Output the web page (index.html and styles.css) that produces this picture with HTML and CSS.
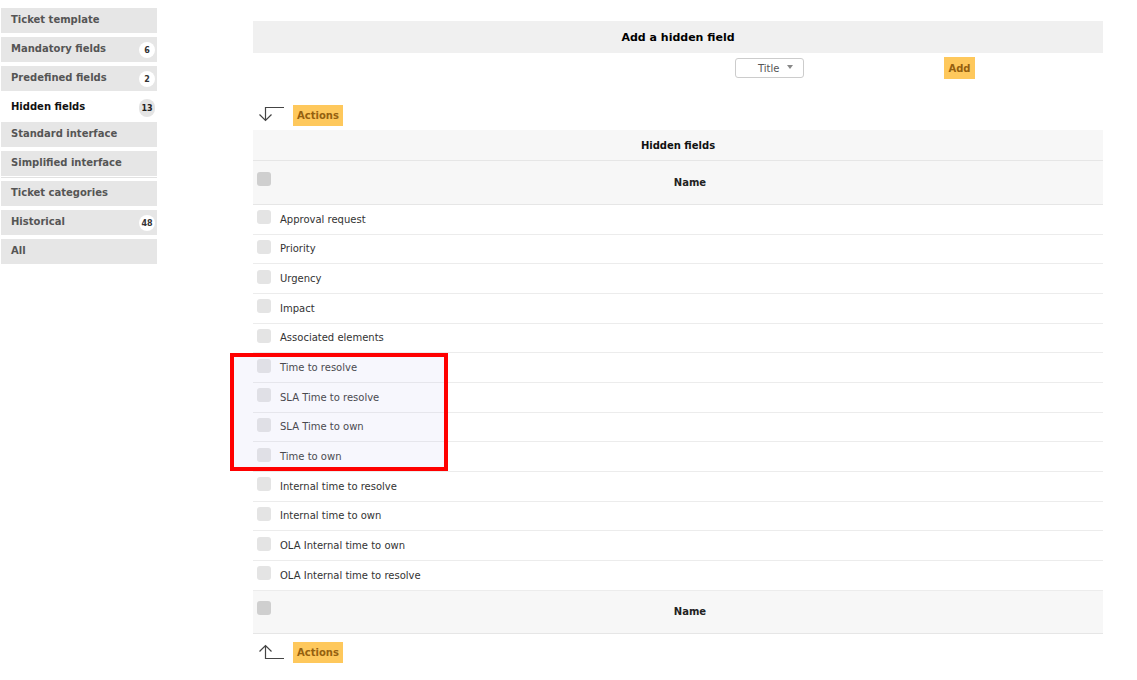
FILE: index.html
```html
<!DOCTYPE html>
<html lang="en">
<head>
<meta charset="utf-8">
<title>Hidden fields</title>
<link rel="stylesheet" href="styles.css">
</head>
<body>
<div class="page">
  <nav class="sidebar">
    <div class="nav-item"><span class="nav-label">Ticket template</span></div>
    <div class="nav-item"><span class="nav-label">Mandatory fields</span><span class="badge">6</span></div>
    <div class="nav-item"><span class="nav-label">Predefined fields</span><span class="badge">2</span></div>
    <div class="nav-item active"><span class="nav-label">Hidden fields</span><span class="badge">13</span></div>
    <div class="nav-item"><span class="nav-label">Standard interface</span></div>
    <div class="nav-item"><span class="nav-label">Simplified interface</span></div>
    <div class="sep"></div>
    <div class="nav-item"><span class="nav-label">Ticket categories</span></div>
    <div class="nav-item"><span class="nav-label">Historical</span><span class="badge">48</span></div>
    <div class="nav-item"><span class="nav-label">All</span></div>
  </nav>

  <main class="main">
    <div class="add-title">Add a hidden field</div>
    <div class="add-row">
      <div></div>
      <div class="select"><span>Title</span><span class="caret"></span></div>
      <div></div>
      <button class="btn">Add</button>
    </div>

    <div class="actions actions-top">
      <svg class="arrow" width="26" height="21" viewBox="0 0 26 21">
        <path d="M25 2.5 H6.5 V15.5 M0.5 9.5 L6.5 15.5 L12.5 9.5" fill="none" stroke="#444" stroke-width="1.2"/>
      </svg>
      <button class="btn">Actions</button>
    </div>

    <div class="table">
      <div class="tbl-title">Hidden fields</div>
      <div class="tbl-head">
        <div class="cell-check"><span class="check dark"></span></div>
        <div class="cell-name">Name</div>
      </div>
      <div class="row"><div class="cell-check"><span class="check"></span></div><div class="cell-text">Approval request</div></div>
      <div class="row"><div class="cell-check"><span class="check"></span></div><div class="cell-text">Priority</div></div>
      <div class="row"><div class="cell-check"><span class="check"></span></div><div class="cell-text">Urgency</div></div>
      <div class="row"><div class="cell-check"><span class="check"></span></div><div class="cell-text">Impact</div></div>
      <div class="row"><div class="cell-check"><span class="check"></span></div><div class="cell-text">Associated elements</div></div>
      <div class="row"><div class="cell-check"><span class="check"></span></div><div class="cell-text">Time to resolve</div></div>
      <div class="row"><div class="cell-check"><span class="check"></span></div><div class="cell-text">SLA Time to resolve</div></div>
      <div class="row"><div class="cell-check"><span class="check"></span></div><div class="cell-text">SLA Time to own</div></div>
      <div class="row"><div class="cell-check"><span class="check"></span></div><div class="cell-text">Time to own</div></div>
      <div class="row"><div class="cell-check"><span class="check"></span></div><div class="cell-text">Internal time to resolve</div></div>
      <div class="row"><div class="cell-check"><span class="check"></span></div><div class="cell-text">Internal time to own</div></div>
      <div class="row"><div class="cell-check"><span class="check"></span></div><div class="cell-text">OLA Internal time to own</div></div>
      <div class="row"><div class="cell-check"><span class="check"></span></div><div class="cell-text">OLA Internal time to resolve</div></div>
      <div class="tbl-head tbl-foot">
        <div class="cell-check"><span class="check dark"></span></div>
        <div class="cell-name">Name</div>
      </div>
    </div>

    <div class="actions actions-bottom">
      <svg class="arrow" width="26" height="21" viewBox="0 0 26 21">
        <path d="M25 16.5 H6.5 V3.5 M0.5 9.5 L6.5 3.5 L12.5 9.5" fill="none" stroke="#444" stroke-width="1.2"/>
      </svg>
      <button class="btn">Actions</button>
    </div>
  </main>
</div>
<div class="highlight"></div>
</body>
</html>
```

FILE: styles.css
```css
html, body {
  margin: 0;
  padding: 0;
  background: #fff;
}

body {
  font-family: "DejaVu Sans", Verdana, sans-serif;
  font-size: 10px;
  color: #333;
  position: relative;
  min-height: 680px;
}

.page {
  display: flex;
  align-items: flex-start;
}

/* Sidebar */
.sidebar {
  width: 156px;
  margin: 8px 0 0 1px;
  display: flex;
  flex-direction: column;
  gap: 4px;
}

.nav-item {
  height: 25px;
  box-sizing: border-box;
  background: #e6e6e6;
  display: flex;
  align-items: center;
  justify-content: space-between;
  padding: 0 2px 0 10px;
  font-weight: bold;
  color: #555;
}

.nav-label {
  margin-bottom: 3px;
}

.nav-item.active {
  background: #fff;
  color: #111;
  margin-bottom: -2px;
}

.badge {
  min-width: 16px;
  height: 16px;
  border-radius: 8px;
  background: #fff;
  color: #333;
  font-size: 8px;
  font-weight: bold;
  display: flex;
  align-items: center;
  justify-content: center;
  margin-top: 1px;
}

.nav-item.active .badge {
  background: #e4e4e4;
  height: 18px;
  color: #222;
}

.sep {
  height: 1px;
  background: #e2e2e2;
  margin: -3px 0 -1px 0;
}

/* Main */
.main {
  margin: 21px 0 0 96px;
  width: 850px;
}

.add-title {
  height: 32px;
  background: #f0f0f0;
  display: flex;
  align-items: center;
  justify-content: center;
  font-size: 11px;
  font-weight: bold;
  color: #000;
}

.add-row {
  height: 32px;
  display: grid;
  grid-template-columns: 482px 69px 140px 31px 1fr;
  align-items: start;
}

.select {
  margin-top: 5px;
  height: 20px;
  box-sizing: border-box;
  border: 1px solid #ccc;
  border-radius: 3px;
  display: flex;
  align-items: center;
  padding-left: 22px;
  color: #555;
}

.caret {
  width: 0;
  height: 0;
  border-left: 3px solid transparent;
  border-right: 3px solid transparent;
  border-top: 4px solid #888;
  margin-left: 8px;
  margin-top: -2px;
}

.btn {
  font-family: "DejaVu Sans", Verdana, sans-serif;
  font-size: 10px;
  font-weight: bold;
  color: #95600f;
  background: #fec85c;
  border: 0;
  border-radius: 0;
  padding: 0 4px;
  height: 22px;
  margin: 4px 0 0 0;
  cursor: pointer;
}

.actions {
  display: flex;
  align-items: flex-start;
  gap: 8px;
  padding-left: 6px;
  height: 21px;
}

.actions .btn {
  margin: 0;
  height: 21px;
  width: 50px;
  padding: 0;
}

.actions-top {
  margin-top: 20px;
}

.actions-bottom {
  margin-top: 8px;
}

.arrow {
  display: block;
}

/* Table */
.table {
  margin-top: 4px;
}

.tbl-title {
  height: 31px;
  box-sizing: border-box;
  background: #f7f7f7;
  border-bottom: 1px solid #e6e6e6;
  display: flex;
  align-items: center;
  justify-content: center;
  font-weight: bold;
  color: #111;
}

.tbl-head {
  height: 44px;
  box-sizing: border-box;
  background: #f7f7f7;
  border-bottom: 1px solid #e6e6e6;
  display: flex;
  align-items: center;
}

.tbl-foot {
  height: 43px;
}

.cell-check {
  width: 24px;
  box-sizing: border-box;
  padding-left: 4px;
  display: flex;
  align-items: center;
}

.tbl-head .cell-check {
  margin-bottom: 7px;
}

.cell-name {
  flex: 1;
  text-align: center;
  font-weight: bold;
  color: #222;
}

.check {
  display: block;
  width: 14px;
  height: 14px;
  border-radius: 3px;
  background: #e4e4e4;
}

.check.dark {
  background: #cfcfcf;
}

.row {
  height: 29.67px;
  box-sizing: border-box;
  border-bottom: 1px solid #ececec;
  display: flex;
  align-items: center;
}

.row .cell-check {
  margin-bottom: 4px;
}

.cell-text {
  padding-left: 3px;
  color: #333;
}

/* Annotation overlay */
.highlight {
  position: absolute;
  left: 230px;
  top: 353px;
  width: 218px;
  height: 118px;
  box-sizing: border-box;
  border: 4px solid #f00;
  background: rgba(200, 200, 240, 0.15);
  pointer-events: none;
}
```
